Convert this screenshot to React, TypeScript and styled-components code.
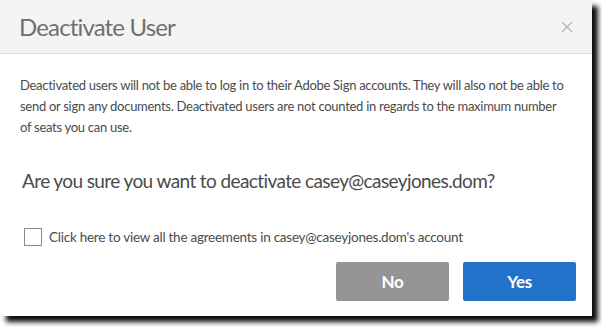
import React, { useState } from 'react';
import styled, { createGlobalStyle } from 'styled-components';

const GlobalStyle = createGlobalStyle`
  html, body {
    margin: 0;
    padding: 0;
    background: #ffffff;
  }
  body {
    font-family: Lato, "Open Sans", sans-serif;
  }
`;

const Page = styled.div`
  width: 602px;
  height: 327px;
  overflow: hidden;
`;

const Dialog = styled.div`
  width: 592px;
  height: 316px;
  background: #ffffff;
  box-shadow: 6px 6px 5px rgba(0, 0, 0, 0.95);
  display: flex;
  flex-direction: column;
`;

const Header = styled.div`
  height: 54px;
  background: #f4f4f4;
  border-bottom: 1px solid #dedede;
  display: flex;
  align-items: center;
  justify-content: space-between;
  padding: 0 18px 0 19px;
  box-sizing: border-box;
`;

const Title = styled.h2`
  margin: 0;
  font-size: 24px;
  font-weight: 400;
  color: #707070;
  letter-spacing: -0.85px;
`;

const CloseButton = styled.button`
  background: none;
  border: none;
  padding: 0;
  width: 14px;
  height: 14px;
  display: flex;
  cursor: pointer;
`;

const Body = styled.div`
  padding: 21px 16px 0 20px;
  display: flex;
  flex-direction: column;
  flex: 1;
`;

const Info = styled.p`
  margin: 0;
  width: 548px;
  font-size: 13px;
  line-height: 21px;
  letter-spacing: -0.28px;
  color: #4b4b4b;
`;

const Question = styled.p`
  margin: 31px 0 0 2px;
  font-size: 19px;
  letter-spacing: -0.6px;
  color: #4b4b4b;
`;

const CheckRow = styled.label`
  display: flex;
  align-items: center;
  gap: 7px;
  margin: 36px 0 0 4px;
  font-size: 13.5px;
  letter-spacing: -0.25px;
  color: #4b4b4b;
  cursor: pointer;
`;

const Box = styled.span<{ $checked: boolean }>`
  width: 16px;
  height: 16px;
  border: 1px solid #8a8a8a;
  background: ${p => (p.$checked ? '#2272c9' : '#ffffff')};
  flex-shrink: 0;
`;

const Actions = styled.div`
  display: flex;
  justify-content: flex-end;
  gap: 14px;
  margin-top: 16px;
`;

const ActionButton = styled.button<{ $primary?: boolean }>`
  width: 113px;
  height: 39px;
  border: none;
  border-radius: 2px;
  background: ${p => (p.$primary ? '#2272c9' : '#959595')};
  color: #ffffff;
  font-family: Lato, "Open Sans", sans-serif;
  font-size: 17px;
  font-weight: 700;
  letter-spacing: -0.3px;
  cursor: pointer;
`;

export default function App() {
  const [checked, setChecked] = useState(false);
  return (
    <Page>
      <GlobalStyle />
      <Dialog>
        <Header>
          <Title>Deactivate User</Title>
          <CloseButton aria-label="Close">
            <svg width="14" height="14" viewBox="0 0 14 14">
              <path d="M2 2L12 12M12 2L2 12" stroke="#b4b4b4" strokeWidth="1.2" />
            </svg>
          </CloseButton>
        </Header>
        <Body>
          <Info>
            Deactivated users will not be able to log in to their Adobe Sign accounts. They will also not be able to
            send or sign any documents. Deactivated users are not counted in regards to the maximum number of seats
            you can use.
          </Info>
          <Question>Are you sure you want to deactivate casey@caseyjones.dom?</Question>
          <CheckRow onClick={() => setChecked(c => !c)}>
            <Box $checked={checked} />
            Click here to view all the agreements in casey@caseyjones.dom's account
          </CheckRow>
          <Actions>
            <ActionButton>No</ActionButton>
            <ActionButton $primary>Yes</ActionButton>
          </Actions>
        </Body>
      </Dialog>
    </Page>
  );
}
